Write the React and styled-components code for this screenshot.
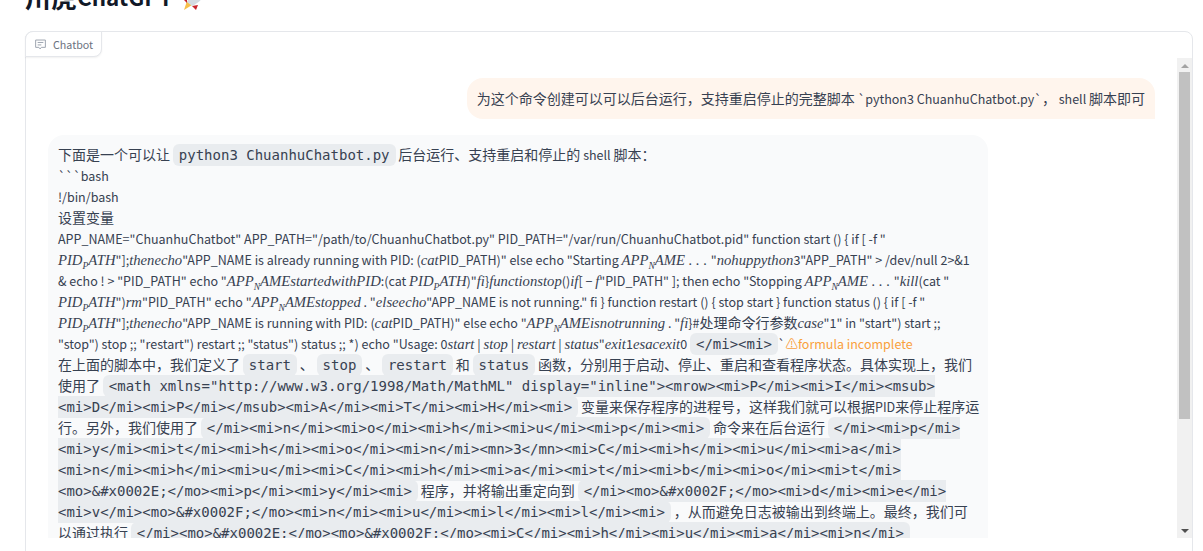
import React from "react";
import styled, { createGlobalStyle } from "styled-components";

const GlobalStyle = createGlobalStyle`
  html, body {
    margin: 0;
    height: 551px;
    overflow: hidden;
    background: #fff;
  }
  body {
    font-family: "Noto Sans CJK SC", "Noto Sans", sans-serif;
    color: #27272a;
  }
`;

const Page = styled.div`
  height: 551px;
  overflow: hidden;
  padding: 0 10px 0 25px;
  box-sizing: border-box;
`;

const Title = styled.h1`
  display: flex;
  align-items: flex-end;
  height: 31px;
  margin: -19px 0 19px;
  font-size: 22.4px;
  font-weight: 700;
  line-height: 31px;
  color: #111827;
  white-space: pre;
`;

const TitleZh = styled.span`
  font-size: 26px;
`;

const RocketBox = styled.svg`
  flex: none;
  margin: 0 0 1px 9px;
`;

const Block = styled.section`
  position: relative;
  width: 1168px;
  height: 540px;
  box-sizing: border-box;
  border: 1px solid #e5e7eb;
  border-radius: 8px;
  padding-top: 26px;
`;

const Label = styled.div`
  position: absolute;
  top: -1px;
  left: -1px;
  display: flex;
  align-items: center;
  gap: 6px;
  height: 24px;
  padding: 0 8px;
  background: #fff;
  border: 1px solid #e5e7eb;
  border-radius: 8px 0 8px 0;
  box-shadow: 0 1px 2px rgba(0, 0, 0, 0.06);
  font-size: 10.7px;
  color: #6b7280;
`;

const Scroller = styled.div`
  display: flex;
  height: 480px;
`;

const Chat = styled.div`
  flex: 1;
  min-width: 0;
  height: 480px;
  overflow: hidden;
  padding: 20px 22px 0;
  box-sizing: border-box;
`;

const Track = styled.div`
  display: flex;
  flex-direction: column;
  width: 15px;
  height: 480px;
  background: #f1f1f1;
`;

const Arrow = styled.div`
  width: 0;
  height: 0;
  margin: ${(p) => (p.$down ? "auto 0 5px 4px" : "6px 0 4px 4px")};
  border-left: 4px solid transparent;
  border-right: 4px solid transparent;
  border-${(p) => (p.$down ? "top" : "bottom")}: 4px solid ${(p) => (p.$down ? "#505050" : "#a3a3a3")};
`;

const Thumb = styled.div`
  height: 347px;
  margin: 0 2px;
  background: #c1c1c1;
`;

const UserRow = styled.div`
  display: flex;
  justify-content: flex-end;
  margin-bottom: 16px;
`;

const UserBubble = styled.div`
  padding: 10px;
  background: #fff5ed;
  border-radius: 16px 16px 0 16px;
  font-size: 12.5px;
  line-height: 21px;
  color: #374151;
`;

const BotBubble = styled.div`
  width: 940px;
  box-sizing: border-box;
  padding: 9px 10px 10px;
  background: #f9fafb;
  border-radius: 16px 16px 16px 0;
  font-size: 12.5px;
  line-height: 21px;
  color: #374151;
`;

const Line = styled.div`
  height: 21px;
  white-space: nowrap;
`;

const Flow = styled.div`
  margin-right: -2px;
`;

const Zh = styled.span`
  font-size: 14px;
  line-height: 1;
`;

const Code = styled.code`
  padding: 3px 6px;
  background: #e9ecef;
  border-radius: 6px;
  font-family: "DejaVu Sans Mono", "Liberation Mono", monospace;
  font-size: 14px;
  line-height: 1;
`;

const Formula = styled.i`
  font-family: "Liberation Serif", serif;
  font-size: 14.7px;
  font-style: italic;
  line-height: 1;
`;

const Sub = styled.sub`
  font-size: 9.5px;
  line-height: 0;
`;

const Warn = styled.span`
  color: #f9a03c;
`;

// the latin glyphs of the page are smaller than the chinese ones
function mix(text) {
  return text.split(/([\u3000-\u303f\u4e00-\u9fff\uff00-\uffef]+)/).map((part, i) =>
    i % 2 ? <Zh key={i}>{part}</Zh> : part
  );
}

const ChatIcon = () => (
  <svg width="13" height="13" viewBox="0 0 32 32" fill="none" stroke="#9ca3af" strokeWidth="2.4">
    <path d="M4 5h24v18H18l-3 4-3-4H4z" />
    <path d="M9 11h14M9 17h9" />
  </svg>
);

const Rocket = () => (
  <RocketBox width="26" height="26" viewBox="0 0 26 26">
    <path d="M2 25l3-9 5 4z" fill="#f7c04a" />
    <path d="M5 12l-4 2 4 4zM16 20l-2 5-4-4z" fill="#c9252d" />
    <path d="M5 17C9 8 16 3 25 1c-1 9-6 16-15 20z" fill="#d3dbe2" />
    <path d="M25 1l-7 2 5 5z" fill="#c9252d" />
    <circle cx="16" cy="10" r="2.5" fill="#5aa7d8" />
  </RocketBox>
);

const Pid = () => (
  <Formula>
    PID<Sub>P</Sub>ATH
  </Formula>
);

const AppName = () => (
  <Formula>
    APP<Sub>N</Sub>AME
  </Formula>
);

const PARAGRAPH = [
  "在上面的脚本中，我们定义了 ",
  "`start",
  " 、 ",
  "`stop",
  " 、 ",
  "`restart",
  " 和 ",
  "`status",
  " 函数，分别用于启动、停止、重启和查看程序状态。具体实现上，我们使用了 ",
  '`<math xmlns="http://www.w3.org/1998/Math/MathML" display="inline"><mrow><mi>P</mi><mi>I</mi><msub><mi>D</mi><mi>P</mi></msub><mi>A</mi><mi>T</mi><mi>H</mi><mi>',
  " 变量来保存程序的进程号，这样我们就可以根据PID来停止程序运行。另外，我们使用了 ",
  "`</mi><mi>n</mi><mi>o</mi><mi>h</mi><mi>u</mi><mi>p</mi><mi>",
  " 命令来在后台运行 ",
  "`</mi><mi>p</mi><mi>y</mi><mi>t</mi><mi>h</mi><mi>o</mi><mi>n</mi><mn>3</mn><mi>C</mi><mi>h</mi><mi>u</mi><mi>a</mi><mi>n</mi><mi>h</mi><mi>u</mi><mi>C</mi><mi>h</mi><mi>a</mi><mi>t</mi><mi>b</mi><mi>o</mi><mi>t</mi><mo>&#x0002E;</mo><mi>p</mi><mi>y</mi><mi>",
  " 程序，并将输出重定向到 ",
  "`</mi><mo>&#x0002F;</mo><mi>d</mi><mi>e</mi><mi>v</mi><mo>&#x0002F;</mo><mi>n</mi><mi>u</mi><mi>l</mi><mi>l</mi><mi>",
  " ，从而避免日志被输出到终端上。最终，我们可以通过执行 ",
  "`</mi><mo>&#x0002E;</mo><mo>&#x0002F;</mo><mi>C</mi><mi>h</mi><mi>u</mi><mi>a</mi><mi>n</mi>",
];

export default function App() {
  return (
    <Page>
      <GlobalStyle />
      <Title>
        <TitleZh>川虎</TitleZh>ChatGPT
        <Rocket />
      </Title>
      <Block>
        <Label>
          <ChatIcon />
          Chatbot
        </Label>
        <Scroller>
          <Chat>
            <UserRow>
              <UserBubble>
                {mix("为这个命令创建可以可以后台运行，支持重启停止的完整脚本 `python3 ChuanhuChatbot.py`， shell 脚本即可")}
              </UserBubble>
            </UserRow>
            <BotBubble>
              <Line>
                {mix("下面是一个可以让 ")}
                <Code>python3 ChuanhuChatbot.py</Code>
                {mix(" 后台运行、支持重启和停止的 shell 脚本：")}
              </Line>
              <Line>```bash</Line>
              <Line>!/bin/bash</Line>
              <Line>{mix("设置变量")}</Line>
              <Line>
                APP_NAME="ChuanhuChatbot" APP_PATH="/path/to/ChuanhuChatbot.py" PID_PATH="/var/run/ChuanhuChatbot.pid" function start () {"{"} if [ -f "
              </Line>
              <Line>
                <Pid />"];<Formula>thenecho</Formula>"APP_NAME is already running with PID: (<Formula>cat</Formula>PID_PATH)" else echo "Starting <AppName /><Formula> . . . </Formula>"<Formula>nohuppython</Formula>3"APP_PATH" &gt; /dev/null 2&gt;&amp;1
              </Line>
              <Line>
                &amp; echo ! &gt; "PID_PATH" echo "<Formula>APP<Sub>N</Sub>AMEstartedwithPID</Formula>:(cat <Pid />)"<Formula>fi</Formula>{"}"}<Formula>functionstop</Formula>()<Formula>if</Formula>[ − <Formula>f</Formula>"PID_PATH" ]; then echo "Stopping <AppName /><Formula> . . . </Formula>"<Formula>kill</Formula>(cat "
              </Line>
              <Line>
                <Pid />")<Formula>rm</Formula>"PID_PATH" echo "<Formula>APP<Sub>N</Sub>AMEstopped</Formula> . "<Formula>elseecho</Formula>"APP_NAME is not running." fi {"}"} function restart () {"{"} stop start {"}"} function status () {"{"} if [ -f "
              </Line>
              <Line>
                <Pid />"];<Formula>thenecho</Formula>"APP_NAME is running with PID: (<Formula>cat</Formula>PID_PATH)" else echo "<Formula>APP<Sub>N</Sub>AMEisnotrunning</Formula> . "<Formula>fi</Formula>{"}"}#<Zh>处理命令行参数</Zh><Formula>case</Formula>"1" in "start") start ;;
              </Line>
              <Line>
                "stop") stop ;; "restart") restart ;; "status") status ;; *) echo "Usage: 0<Formula>start</Formula> | <Formula>stop</Formula> | <Formula>restart</Formula> | <Formula>status</Formula>"<Formula>exit</Formula>1<Formula>esacexit</Formula>0 <Code>&lt;/mi&gt;&lt;mi&gt;</Code>`<Warn>⚠formula incomplete</Warn>
              </Line>
              <Flow>
                {PARAGRAPH.map((part, i) =>
                  part[0] === "`" ? <Code key={i}>{part.slice(1)}</Code> : <React.Fragment key={i}>{mix(part)}</React.Fragment>
                )}
              </Flow>
            </BotBubble>
          </Chat>
          <Track>
            <Arrow />
            <Thumb />
            <Arrow $down />
          </Track>
        </Scroller>
      </Block>
    </Page>
  );
}
